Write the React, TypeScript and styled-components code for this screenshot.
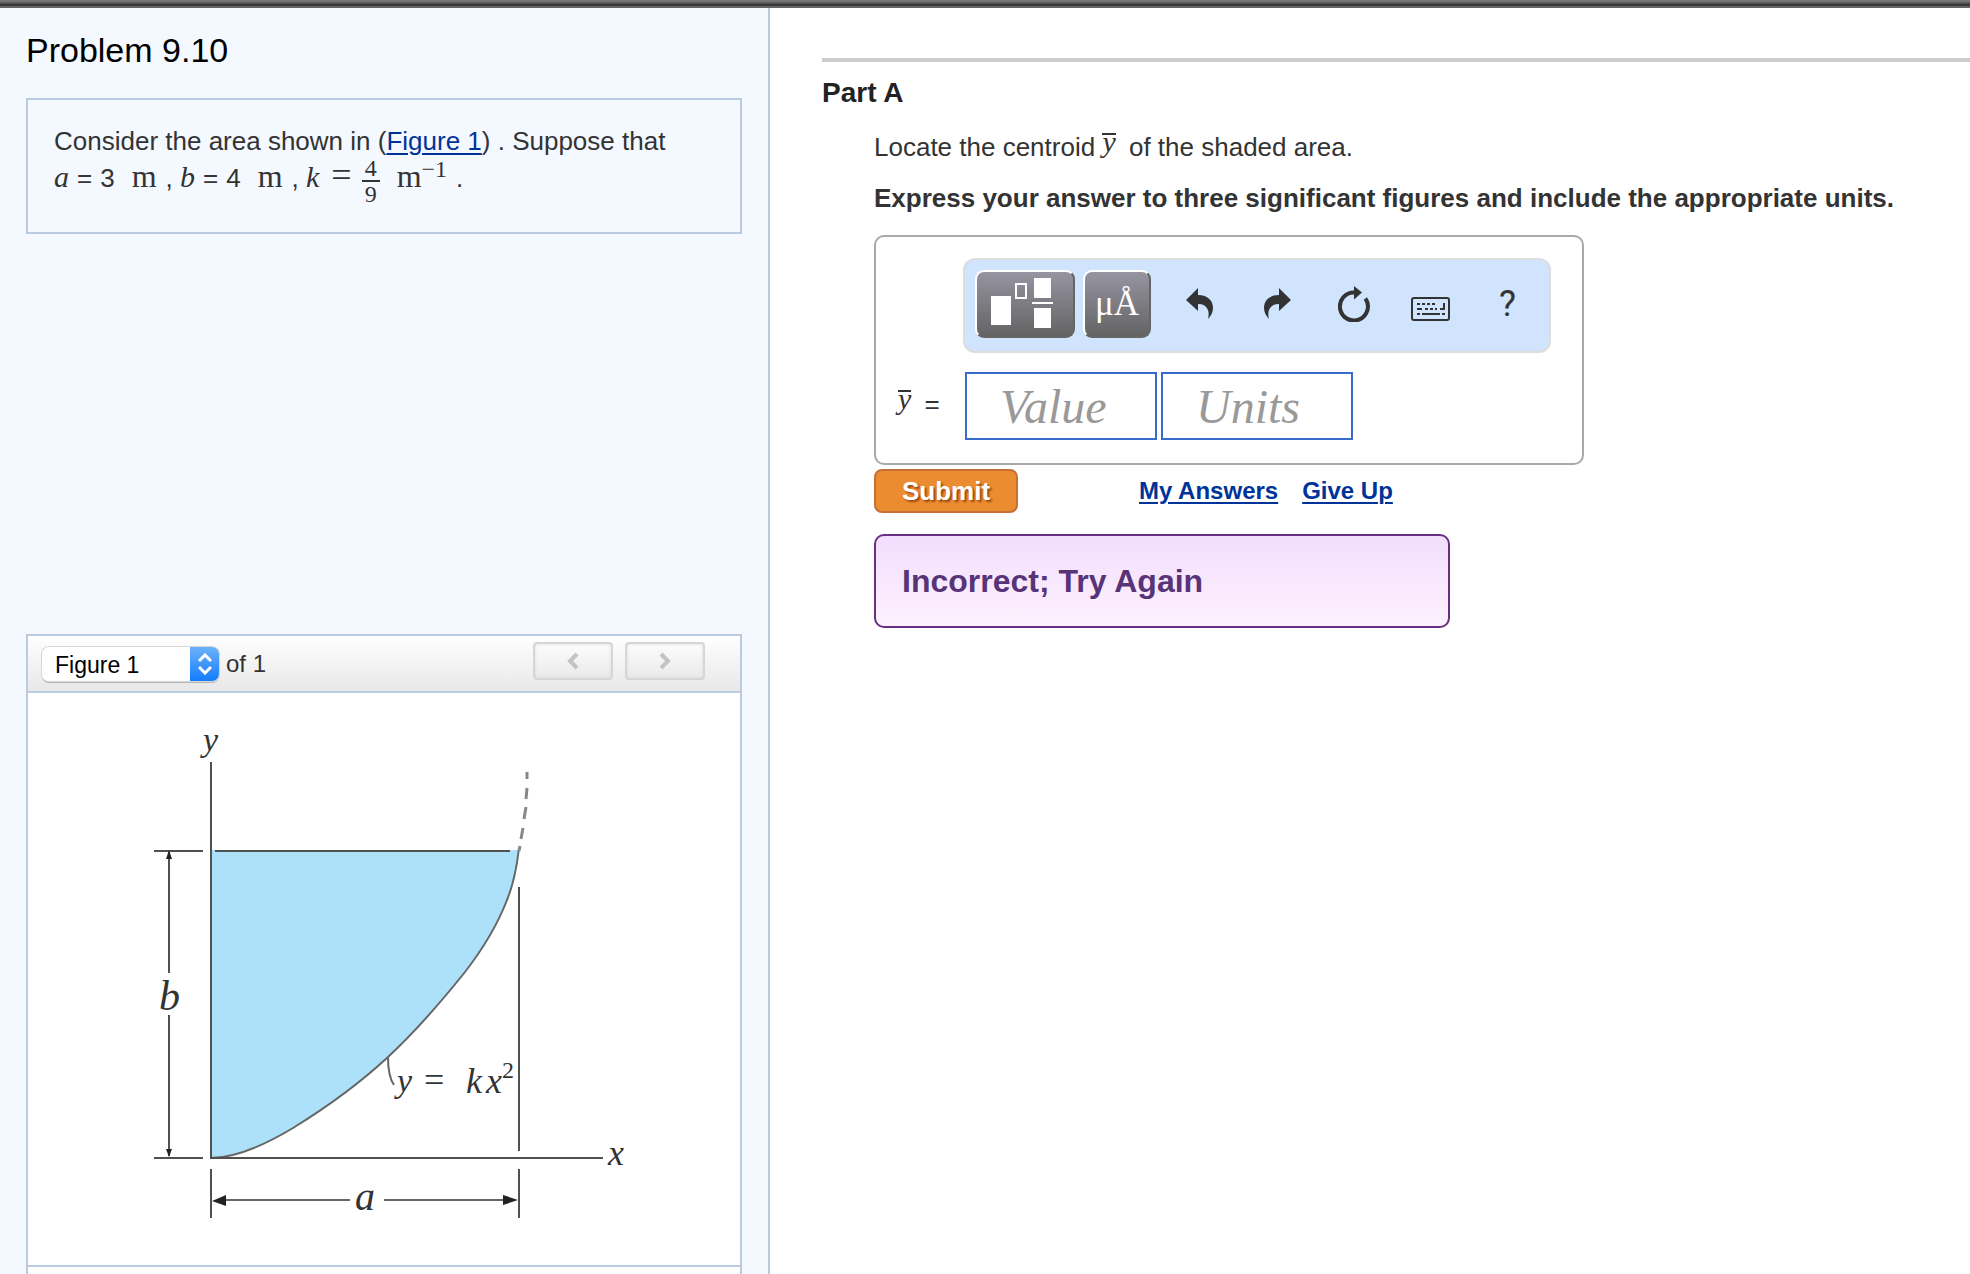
import React from "react";
import styled, { createGlobalStyle } from "styled-components";

const sans = `"Liberation Sans", Arial, Helvetica, sans-serif`;
const serif = `"Liberation Serif", "Times New Roman", serif`;
const line = "#b9cbdf";

const Global = createGlobalStyle`
  *, *::before, *::after { box-sizing: border-box; }
  html, body, #root { height: 100%; }
  body { margin: 0; overflow: hidden; background: #fff; color: #333; font: 26px/36px ${sans}; }
  h1, h2, p { margin: 0; font-size: inherit; font-weight: inherit; }
  button, input, select { margin: 0; padding: 0; font: inherit; color: inherit; }
`;

const Page = styled.div`
  display: flex;
  flex-direction: column;
  min-height: 100%;
`;
const TopBar = styled.header`
  height: 8px;
  flex: none;
  background: linear-gradient(#7c7c7c, #6e6e6e 25%, #404040 50%, #333 75%, #666 75%);
`;
const Columns = styled.div`
  display: flex;
  flex: 1;
`;

/* Left column */
const Sidebar = styled.aside`
  flex: none;
  width: 770px;
  padding: 22px 26px 0;
  border-right: 2px solid ${line};
  background: #f4f8ff;
`;
const Title = styled.h1`
  color: #000;
  font-size: 34px;
  line-height: 40px;
`;
const Statement = styled.section`
  height: 136px;
  margin-top: 28px;
  padding: 23px 26px 0;
  border: 2px solid ${line};
`;
const Link = styled.a<{ $bold?: boolean }>`
  color: #039;
  text-decoration: underline;
  text-decoration-thickness: 2px;
  text-underline-offset: 3px;
  ${(p) => p.$bold && `font-size: 24px; font-weight: bold;`}
`;
const Formula = styled.div`
  display: flex;
  align-items: baseline;
  height: 32px;
  line-height: 32px;
  white-space: pre;
`;
const Variable = styled.i`
  font-family: ${serif};
  font-size: 30px;
`;
const Unit = styled.span`
  margin: 0 9px 0 17px;
  font: 32px/32px ${serif};
`;
const Equals = styled.span<{ $wide?: boolean }>`
  margin: 0 8px;
  ${(p) => p.$wide && `margin: 0 10px 0 12px; font: 36px/32px ${serif};`}
`;
const Fraction = styled.span`
  display: inline-flex;
  flex-direction: column;
  align-self: center;
  margin-top: 12px;
  font: 24px/24px ${serif};
  text-align: center;
  & > span:first-child { border-bottom: 2px solid #333; }
  & > span { padding: 0 3px; }
`;
const Power = styled.sup`
  font-size: 24px;
  line-height: 0;
  vertical-align: 10px;
`;

const FigurePanel = styled.section`
  margin-top: 400px;
  border: 2px solid ${line};
  border-bottom: 0;
  background: #fff;
`;
const FigureHeader = styled.div`
  display: flex;
  align-items: center;
  height: 57px;
  padding: 0 35px 0 14px;
  border-bottom: 2px solid ${line};
  background: linear-gradient(#fff, #e8e8e8);
  font-size: 24px;
`;
const SelectWrap = styled.label`
  display: flex;
  align-items: stretch;
  width: 177px;
  height: 34px;
  margin-right: 7px;
  overflow: hidden;
  border-radius: 7px;
  background: #fff;
  box-shadow: 0 0 0 1px #d6d6d6, 0 2px 1px #b4b4b4;
`;
const Select = styled.select`
  appearance: none;
  flex: 1;
  min-width: 0;
  padding-left: 13px;
  border: 0;
  background: #fff;
  color: #000;
  font-size: 23px;
`;
const SelectArrows = styled.span`
  display: flex;
  align-items: center;
  justify-content: center;
  width: 29px;
  background: linear-gradient(#6bb2f9, #147cff);
`;
const Pager = styled.div`
  display: flex;
  gap: 12px;
  margin-left: auto;
  padding-bottom: 5px;
`;
const PageButton = styled.button`
  display: grid;
  place-items: center;
  width: 80px;
  height: 38px;
  border: 2px solid #d6d6d6;
  border-radius: 4px;
  background: linear-gradient(#fcfcfc, #eaeaea);
  box-shadow: inset 0 0 3px #d8d8d8;
`;
const Diagram = styled.svg`
  display: block;
  width: 712px;
  height: 572px;
  font-family: ${serif};
  font-style: italic;
`;
const FigureFooter = styled.div`
  height: 60px;
  border-top: 2px solid ${line};
  background: linear-gradient(#fff, #e8e8e8);
`;

/* Right column */
const Main = styled.main`
  flex: 1;
  min-width: 0;
  padding: 50px 0 0 52px;
`;
const Part = styled.section`
  border-top: 4px solid #ccc;
`;
const PartTitle = styled.h2`
  padding-top: 13px;
  color: #222;
  font-size: 28px;
  font-weight: bold;
  line-height: 36px;
`;
const PartBody = styled.div`
  padding: 18px 0 0 52px;
`;
const Instruction = styled.p`
  margin-top: 15px;
  font-weight: bold;
`;
const Bar = styled.i`
  display: inline-block;
  margin-right: 6px;
  border-top: 2px solid #333;
  font: italic 30px/14px ${serif};
  vertical-align: 4px;
`;
const AnswerBox = styled.form`
  width: 710px;
  height: 230px;
  margin-top: 19px;
  padding: 21px 31px 0 22px;
  border: 2px solid #a9a9a9;
  border-radius: 10px;
`;
const Toolbar = styled.div`
  display: flex;
  align-items: flex-start;
  height: 95px;
  margin-left: 65px;
  padding: 10px 0 0 10px;
  border: 2px solid #ddd;
  border-radius: 12px;
  background: #d0e5fd;
`;
const PaletteButton = styled.button<{ $wide?: boolean }>`
  display: grid;
  place-items: center;
  width: ${(p) => (p.$wide ? 100 : 68)}px;
  height: 68px;
  margin-right: ${(p) => (p.$wide ? 8 : 10)}px;
  border: 2px solid;
  border-color: #fff #666 #666 #fff;
  border-radius: 9px;
  background: linear-gradient(#9896a3, #626262) border-box;
  color: #fff;
  font: 35px/44px ${serif};
`;
const ToolButton = styled.button`
  display: grid;
  place-items: center;
  width: 77px;
  height: 68px;
  border: 0;
  background: none;
  font: 36px/40px Roboto, ${sans};
`;
const AnswerRow = styled.div`
  display: flex;
  align-items: center;
  gap: 4px;
  margin-top: 19px;
`;
const AnswerLabel = styled.label`
  width: 63px;
  padding-bottom: 4px;
`;
const AnswerInput = styled.input`
  width: 192px;
  height: 68px;
  padding-left: 33px;
  border: 2px solid #366ccb;
  border-radius: 0;
  background: #fff;
  font: italic 48px/60px ${serif};
  &::placeholder { color: #999; opacity: 1; }
`;
const Actions = styled.div`
  display: flex;
  align-items: center;
  gap: 24px;
  margin-top: 4px;
`;
const Submit = styled.button`
  width: 144px;
  height: 44px;
  margin-right: 97px;
  border: 2px solid #c67036;
  border-radius: 8px;
  background: #ec8c31;
  color: #fff;
  font-weight: bold;
  text-shadow: 2px 2px 2px #9c4a10;
`;
const Feedback = styled.div`
  display: flex;
  align-items: center;
  width: 576px;
  height: 94px;
  margin-top: 21px;
  padding-left: 26px;
  border: 2px solid #692f83;
  border-radius: 10px;
  background: linear-gradient(#f2defd, #fdf1fe);
  color: #573477;
  font-size: 32px;
  font-weight: bold;
`;

const CurveArrow = ({ flip = false }: { flip?: boolean }) => (
  <svg width="28" height="32" viewBox="0 0 28 32" fill="#333">
    <path
      transform={flip ? "translate(28 0) scale(-1 1)" : undefined}
      d="M0 12 12 0v7c10 0 15 6 15 13 0 4-2 8-5 11 2-7 0-15-10-15v7z"
    />
  </svg>
);

const TemplatesIcon = () => (
  <svg width="70" height="54" viewBox="0 0 70 54" fill="#fff">
    <path d="M1 19h20v29H1zM44 1h17v20H44zM44 31h17v20H44zM42 25h21v2H42z" />
    <path d="M26 7h10v14H26z" fill="none" stroke="#fff" strokeWidth="2" />
  </svg>
);

const ResetIcon = () => (
  <svg width="32" height="36" viewBox="0 0 32 36">
    <path d="M27.4 12.5A14 14 0 1 1 16 6.5" fill="none" stroke="#333" strokeWidth="4" />
    <path d="M16 0l8 6.5-8 7z" fill="#333" />
  </svg>
);

const KeyboardIcon = () => (
  <svg width="40" height="34" viewBox="0 -10 40 34" fill="none" stroke="#333">
    <rect x="1" y="1" width="37" height="22" rx="2" strokeWidth="2" />
    <path d="M6 7h20M14 12h12" strokeWidth="2" strokeDasharray="3 2" />
    <path d="M6 12h5M6 17h3M11 17h18M31 17h3M29 12h4V6" strokeWidth="2" />
  </svg>
);

const Chevron = ({ right = false }: { right?: boolean }) => (
  <svg width="12" height="18" viewBox="0 0 12 18">
    <path d={right ? "M2 2l7 7-7 7" : "M10 2L3 9l7 7"} fill="none" stroke="#c3c3c3" strokeWidth="4" />
  </svg>
);

const curve =
  "C517 866 514 883 507 900C497 926 482 950 465 972C441 1002 416 1031 388 1057C359 1084 327 1107 293 1128C268 1143 238 1158 211 1158";

const CentroidDiagram = () => (
  <Diagram viewBox="28 693 712 572" role="img" aria-label="Shaded area bounded by y = kx squared">
    <path d={`M211 850H519${curve}Z`} fill="#ace1f9" />
    <path d={`M519 848${curve}`} fill="none" stroke="#666" strokeWidth="2" />
    <g fill="none" stroke="#505050" strokeWidth="2">
      <path d="M211 762V1158H603M215 851H510M154 851H203M154 1158H203" />
      <path d="M169 852V973M169 1015V1156M519 887V1151M211 1169V1218M519 1169V1218" />
      <path d="M388 1057C388 1068 389 1078 394 1085" stroke="#666" />
    </g>
    <path d="M222 1200H350M384 1200H508" stroke="#666" strokeWidth="2" />
    <path d="M212 1201l14-6v11zM518 1200l-15-5v10zM169 850l3 9h-6zM169 1157l3-8h-6z" fill="#222" />
    <g stroke="#888" strokeWidth="3">
      <path d="M527 772V779M527 788L526 799M526 807L524 819M523 828L521 839M520 846L519 851" fill="none" />
    </g>
    <g fill="#333">
      <text x="203" y="751" fontSize="34">y</text>
      <text x="159" y="1010" fontSize="42">b</text>
      <text x="355" y="1210" fontSize="40">a</text>
      <text x="608" y="1165" fontSize="36">x</text>
      <text x="397" y="1092" fontSize="34">y</text>
      <text x="424" y="1092" fontSize="36" fontStyle="normal">=</text>
      <text x="466" y="1093" fontSize="36">k</text>
      <text x="486" y="1093" fontSize="36">x</text>
      <text x="502" y="1078" fontSize="24" fontStyle="normal">2</text>
    </g>
  </Diagram>
);

export default function App() {
  return (
    <Page>
      <Global />
      <TopBar />
      <Columns>
        <Sidebar>
          <Title>Problem 9.10</Title>
          <Statement>
            <p>
              Consider the area shown in (<Link href="#figure">Figure 1</Link>) . Suppose that
            </p>
            <Formula>
              <Variable>a</Variable>
              <Equals>=</Equals>3<Unit>m</Unit>, <Variable>b</Variable>
              <Equals>=</Equals>4<Unit>m</Unit>, <Variable>k</Variable>
              <Equals $wide>=</Equals>
              <Fraction>
                <span>4</span>
                <span>9</span>
              </Fraction>
              <Unit>
                m<Power>−1</Power>
              </Unit>
              .
            </Formula>
          </Statement>
          <FigurePanel id="figure">
            <FigureHeader>
              <SelectWrap>
                <Select aria-label="Figure" defaultValue="1">
                  <option value="1">Figure 1</option>
                </Select>
                <SelectArrows>
                  <svg width="14" height="22" viewBox="0 0 14 22">
                    <path d="M1 8l6-6 6 6M1 14l6 6 6-6" fill="none" stroke="#fff" strokeWidth="3" />
                  </svg>
                </SelectArrows>
              </SelectWrap>
              of 1
              <Pager>
                <PageButton type="button" aria-label="Previous figure">
                  <Chevron />
                </PageButton>
                <PageButton type="button" aria-label="Next figure">
                  <Chevron right />
                </PageButton>
              </Pager>
            </FigureHeader>
            <CentroidDiagram />
            <FigureFooter />
          </FigurePanel>
        </Sidebar>
        <Main>
          <Part>
            <PartTitle>Part A</PartTitle>
            <PartBody>
              <p>
                Locate the centroid <Bar>y</Bar> of the shaded area.
              </p>
              <Instruction>
                Express your answer to three significant figures and include the appropriate units.
              </Instruction>
              <AnswerBox onSubmit={(e) => e.preventDefault()} id="answer">
                <Toolbar>
                  <PaletteButton type="button" $wide aria-label="Templates">
                    <TemplatesIcon />
                  </PaletteButton>
                  <PaletteButton type="button">μÅ</PaletteButton>
                  <ToolButton type="button" aria-label="Undo">
                    <CurveArrow />
                  </ToolButton>
                  <ToolButton type="button" aria-label="Redo">
                    <CurveArrow flip />
                  </ToolButton>
                  <ToolButton type="button" aria-label="Reset">
                    <ResetIcon />
                  </ToolButton>
                  <ToolButton type="button" aria-label="Keyboard shortcuts">
                    <KeyboardIcon />
                  </ToolButton>
                  <ToolButton type="button">?</ToolButton>
                </Toolbar>
                <AnswerRow>
                  <AnswerLabel htmlFor="value">
                    <Bar>y</Bar> =
                  </AnswerLabel>
                  <AnswerInput id="value" placeholder="Value" />
                  <AnswerInput aria-label="Units" placeholder="Units" />
                </AnswerRow>
              </AnswerBox>
              <Actions>
                <Submit type="submit" form="answer">Submit</Submit>
                <Link $bold href="#answers">My Answers</Link>
                <Link $bold href="#give-up">Give Up</Link>
              </Actions>
              <Feedback role="status">Incorrect; Try Again</Feedback>
            </PartBody>
          </Part>
        </Main>
      </Columns>
    </Page>
  );
}
